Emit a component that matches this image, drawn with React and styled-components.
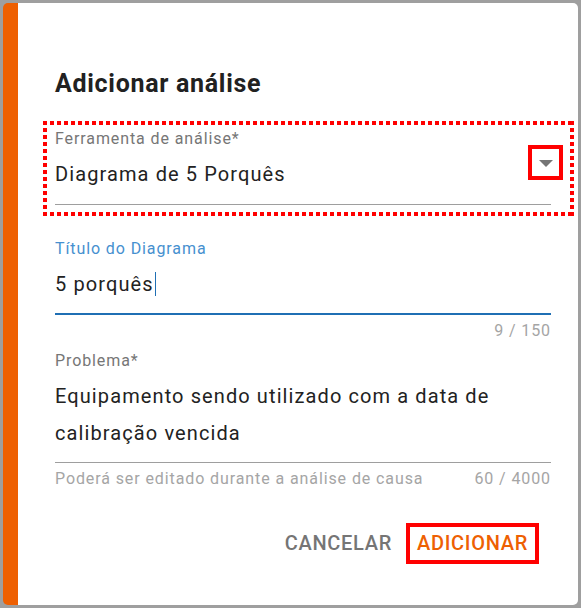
import React from 'react';
import styled, { createGlobalStyle } from 'styled-components';

const GlobalStyle = createGlobalStyle`
  html, body {
    margin: 0;
    padding: 0;
    background: #9f9f9f;
    font-family: Roboto, "Liberation Sans", sans-serif;
  }
`;

const Page = styled.div`
  padding: 3px;
  height: 608px;
  box-sizing: border-box;
`;

const Dialog = styled.div`
  height: 602px;
  box-sizing: border-box;
  background: #fff;
  border-left: 15px solid #ee6002;
  border-radius: 5px;
  padding: 65px 27px 0 37px;
  display: flex;
  flex-direction: column;
`;

const Title = styled.h2`
  margin: 0 0 29px;
  font-size: 25px;
  line-height: 32px;
  font-weight: 700;
  letter-spacing: 0.7px;
  color: #212121;
`;

const Field = styled.div`
  position: relative;
  margin-bottom: ${p => p.$gap || 0}px;
`;

// red dotted annotation drawn around the first field
const Highlight = styled.div`
  position: absolute;
  top: -8px;
  bottom: -11px;
  left: -12px;
  right: -23px;
  pointer-events: none;
  background:
    repeating-linear-gradient(90deg, #f00 0 4px, transparent 4px 7px) top left / 100% 4px no-repeat,
    repeating-linear-gradient(90deg, #f00 0 4px, transparent 4px 7px) bottom left / 100% 4px no-repeat,
    repeating-linear-gradient(180deg, #f00 0 4px, transparent 4px 7px) top left / 4px 100% no-repeat,
    repeating-linear-gradient(180deg, #f00 0 4px, transparent 4px 7px) top right / 4px 100% no-repeat;
`;

const Label = styled.div`
  font-size: 16px;
  line-height: 20px;
  letter-spacing: 0.9px;
  color: ${p => (p.$focused ? '#4690cf' : '#767676')};
`;

const InputRow = styled.div`
  display: flex;
  align-items: flex-start;
  padding: ${p => p.$pad || '9px 0 14px'};
  border-bottom: ${p => (p.$focused ? '2px solid #1f6fb4' : '1px solid #9e9e9e')};
`;

const Value = styled.div`
  flex: 1;
  font-size: 20px;
  line-height: ${p => p.$lh || 32}px;
  letter-spacing: 1.1px;
  color: #222;
`;

const Caret = styled.span`
  display: inline-block;
  width: 1px;
  height: 24px;
  margin-left: 1px;
  background: #1f6fb4;
  vertical-align: -5px;
`;

const ArrowBox = styled.div`
  position: relative;
  width: 35px;
  height: 35px;
  margin: -13px -12px -13px 0;
  display: flex;
  align-items: center;
  justify-content: center;
  &::after {
    content: '';
    position: absolute;
    inset: 0;
    border: 4px solid #f00;
  }
`;

const Triangle = styled.div`
  width: 0;
  height: 0;
  margin-top: 1px;
  border-left: 7px solid transparent;
  border-right: 7px solid transparent;
  border-top: 7px solid #757575;
`;

const Details = styled.div`
  display: flex;
  justify-content: space-between;
  padding-top: 6px;
  font-size: 16px;
  line-height: 20px;
  letter-spacing: 0.9px;
  color: #a5a5a5;
`;

const Actions = styled.div`
  margin-top: auto;
  margin-bottom: 41px;
  padding-right: 12px;
  display: flex;
  justify-content: flex-end;
  align-items: center;
  gap: 3px;
`;

const Button = styled.button`
  position: relative;
  background: none;
  border: none;
  padding: 9px 11px;
  font-family: inherit;
  font-size: 20px;
  line-height: 23px;
  font-weight: 500;
  letter-spacing: 0.7px;
  color: ${p => (p.$primary ? '#ee6002' : '#757575')};
  cursor: pointer;
  ${p => p.$marked && `
    &::after {
      content: '';
      position: absolute;
      inset: 0;
      border: 4px solid #f00;
    }
  `}
`;

export default function App() {
  return (
    <>
      <GlobalStyle />
      <Page>
        <Dialog>
          <Title>Adicionar análise</Title>

          <Field $gap={34}>
            <Highlight />
            <Label>Ferramenta de análise*</Label>
            <InputRow>
              <Value>Diagrama de 5 Porquês</Value>
              <ArrowBox>
                <Triangle />
              </ArrowBox>
            </InputRow>
          </Field>

          <Field $gap={10}>
            <Label $focused>Título do Diagrama</Label>
            <InputRow $focused $pad="9px 0 13px">
              <Value>
                5 porquês<Caret />
              </Value>
            </InputRow>
            <Details>
              <span />
              <span>9 / 150</span>
            </Details>
          </Field>

          <Field>
            <Label>Problema*</Label>
            <InputRow $pad="7px 0 10px">
              <Value $lh={37}>
                Equipamento sendo utilizado com a data de calibração vencida
              </Value>
            </InputRow>
            <Details>
              <span>Poderá ser editado durante a análise de causa</span>
              <span>60 / 4000</span>
            </Details>
          </Field>

          <Actions>
            <Button>CANCELAR</Button>
            <Button $primary $marked>ADICIONAR</Button>
          </Actions>
        </Dialog>
      </Page>
    </>
  );
}
